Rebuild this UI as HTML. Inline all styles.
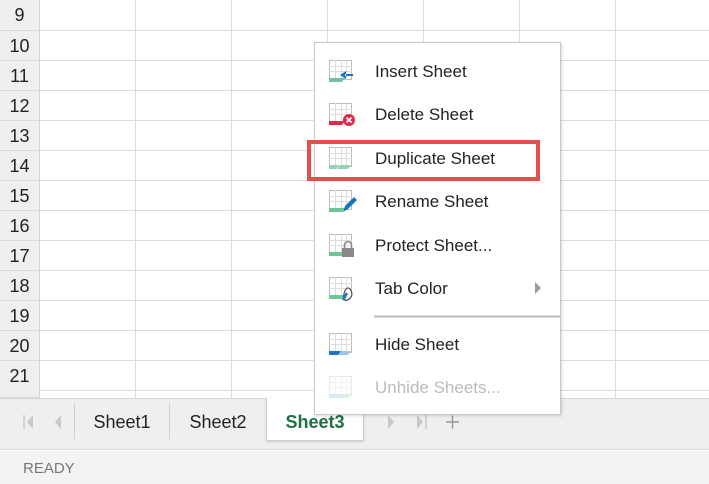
<!DOCTYPE html>
<html><head><style>
*{margin:0;padding:0;box-sizing:border-box}
body{width:709px;height:484px;overflow:hidden;background:#fff;font-family:"Liberation Sans","DejaVu Sans",sans-serif;position:relative}
.rh{position:absolute;left:0;width:40px;background:#efefef;border-right:1px solid #d4d4d4;border-bottom:1px solid #d9d9d9;font-size:18px;color:#222;text-align:center;line-height:30px}
.vl{position:absolute;top:0;height:398px;width:1px;background:#dcdcdc}
.hl{position:absolute;left:40px;right:0;height:1px;background:#dcdcdc}
.menu{position:absolute;left:314px;top:42px;width:247px;height:373px;background:#fff;border:1px solid #c8c8c8;box-shadow:1px 1px 3px rgba(0,0,0,.15)}
.it{position:absolute;left:60px;font-size:17px;color:#222}
.ic{position:absolute;left:14px}
.tabbar{position:absolute;left:0;top:398px;width:709px;height:52px;background:#efefef;border-top:1px solid #d6d6d6;border-bottom:1px solid #dcdcdc}
.tab{position:absolute;top:400px;height:40px;font-size:18px;color:#222;text-align:center;line-height:44px}
</style></head><body>
<div class="rh" style="top:0;height:31px">9</div>
<div class="rh" style="top:31px;height:30px">10</div>
<div class="rh" style="top:61px;height:30px">11</div>
<div class="rh" style="top:91px;height:30px">12</div>
<div class="rh" style="top:121px;height:30px">13</div>
<div class="rh" style="top:151px;height:30px">14</div>
<div class="rh" style="top:181px;height:30px">15</div>
<div class="rh" style="top:211px;height:30px">16</div>
<div class="rh" style="top:241px;height:30px">17</div>
<div class="rh" style="top:271px;height:30px">18</div>
<div class="rh" style="top:301px;height:30px">19</div>
<div class="rh" style="top:331px;height:30px">20</div>
<div class="rh" style="top:361px;height:37px;line-height:30px">21</div>
<div class="vl" style="left:135px"></div><div class="vl" style="left:231px"></div><div class="vl" style="left:327px"></div><div class="vl" style="left:423px"></div><div class="vl" style="left:519px"></div><div class="vl" style="left:615px"></div>
<div class="hl" style="top:30px"></div><div class="hl" style="top:60px"></div><div class="hl" style="top:90px"></div><div class="hl" style="top:120px"></div><div class="hl" style="top:150px"></div><div class="hl" style="top:180px"></div><div class="hl" style="top:210px"></div><div class="hl" style="top:240px"></div><div class="hl" style="top:270px"></div><div class="hl" style="top:300px"></div><div class="hl" style="top:330px"></div><div class="hl" style="top:360px"></div><div class="hl" style="top:390px"></div>

<div class="tabbar"></div>
<svg style="position:absolute;left:0;top:398px" width="709" height="52">
<path d="M24 17v14" stroke="#c8c8c8" stroke-width="1.5"/><path d="M33 17l-6 7 6 7z" fill="#c8c8c8"/>
<path d="M61 17l-6 7 6 7z" fill="#c8c8c8"/>
<path d="M388 17l6 7-6 7z" fill="#c8c8c8"/>
<path d="M417 17l6 7-6 7z" fill="#c8c8c8"/><path d="M426 17v14" stroke="#c8c8c8" stroke-width="1.5"/>
<path d="M446 24h13M452.5 17.5v13" stroke="#999" stroke-width="1.5"/>
<path d="M74.5 5v36M169.5 5v36" stroke="#d0d0d0"/>
</svg>
<div class="tab" style="left:74px;width:96px">Sheet1</div>
<div class="tab" style="left:170px;width:96px">Sheet2</div>
<div class="tab" style="left:266px;width:98px;top:398px;height:43px;background:#fff;border:1px solid #d0d0d0;border-top:none;box-shadow:0 1px 2px rgba(0,0,0,.15);color:#1e7145;font-weight:bold;line-height:48px">Sheet3</div>
<div style="position:absolute;left:0;top:451px;width:709px;height:33px;background:#f3f3f3;font-size:15px;color:#777;padding:9px 0 0 23px">READY</div>

<div class="menu">
<svg width="247" height="373" style="position:absolute;left:0;top:0">
<defs><g id="g"><rect x="0.5" y="0.5" width="22" height="19" fill="#fff" stroke="#bbb"/><path d="M0 6.5h23M0 11.5h23M6.5 0v20M12.5 0v20M17.5 0v20" stroke="#ddd"/></g></defs>
<g transform="translate(14,17)"><use href="#g"/><path d="M0 18h16l-3 4H0z" fill="#6fc59a"/><path d="M17 11l-6 4 6 4z M16 14h8v2h-8z" fill="#1e73be"/></g>
<g transform="translate(14,60)"><use href="#g"/><path d="M0 18h16l-3 4H0z" fill="#e0284a"/><circle cx="20" cy="17" r="6" fill="#e0284a"/><path d="M17.5 14.5l5 5M22.5 14.5l-5 5" stroke="#fff" stroke-width="1.6"/></g>
<g transform="translate(14,104)"><use href="#g"/><path d="M0 18h10l-3 4H0z M11 18h11l-3 4h-11z" fill="#8fd4b0"/></g>
<g transform="translate(14,147)"><use href="#g"/><path d="M0 18h16l-3 4H0z" fill="#6fc59a"/><path d="M14 22l2-6 9-9 3 3-9 9z" fill="#1e73be"/></g>
<g transform="translate(14,191)"><use href="#g"/><path d="M0 18h16l-3 4H0z" fill="#6fc59a"/><rect x="13" y="14" width="12" height="9" fill="#888"/><path d="M15.5 14v-3a3.5 3.5 0 0 1 7 0v3" fill="none" stroke="#888" stroke-width="1.6"/></g>
<g transform="translate(14,234)"><use href="#g"/><path d="M0 18h16l-3 4H0z" fill="#6fc59a"/><path d="M16 23c-3-3 0-12 3-12s5 6 3 9-5 4-6 3z" fill="#fff" stroke="#555" stroke-width="1.3"/><path d="M14 23l4-7" stroke="#1e73be" stroke-width="2.5"/></g>
<path d="M220 239l6 6-6 6z" fill="#999"/>
<path d="M59 273.5h186" stroke="#bbb" stroke-width="2"/>
<g transform="translate(14,290)"><use href="#g"/><path d="M0 18h12l-3 4H0z" fill="#1e73be"/><path d="M12 18h10l-3 4h-10z" fill="#9cc5ea"/></g>
<g transform="translate(14,333)" opacity="0.35"><use href="#g"/><path d="M0 18h12l-3 4H0z" fill="#9cc5ea"/><path d="M12 18h10l-3 4h-10z" fill="#8fd4b0"/></g>
</svg>
<div class="it" style="top:19px">Insert Sheet</div>
<div class="it" style="top:62px">Delete Sheet</div>
<div class="it" style="top:106px">Duplicate Sheet</div>
<div class="it" style="top:149px">Rename Sheet</div>
<div class="it" style="top:193px">Protect Sheet...</div>
<div class="it" style="top:236px">Tab Color</div>
<div class="it" style="top:292px">Hide Sheet</div>
<div class="it" style="top:335px;color:#bbb">Unhide Sheets...</div>
</div>
<div style="position:absolute;left:307px;top:140px;width:233px;height:41px;border:4px solid #e84c4c"></div>
</body></html>
